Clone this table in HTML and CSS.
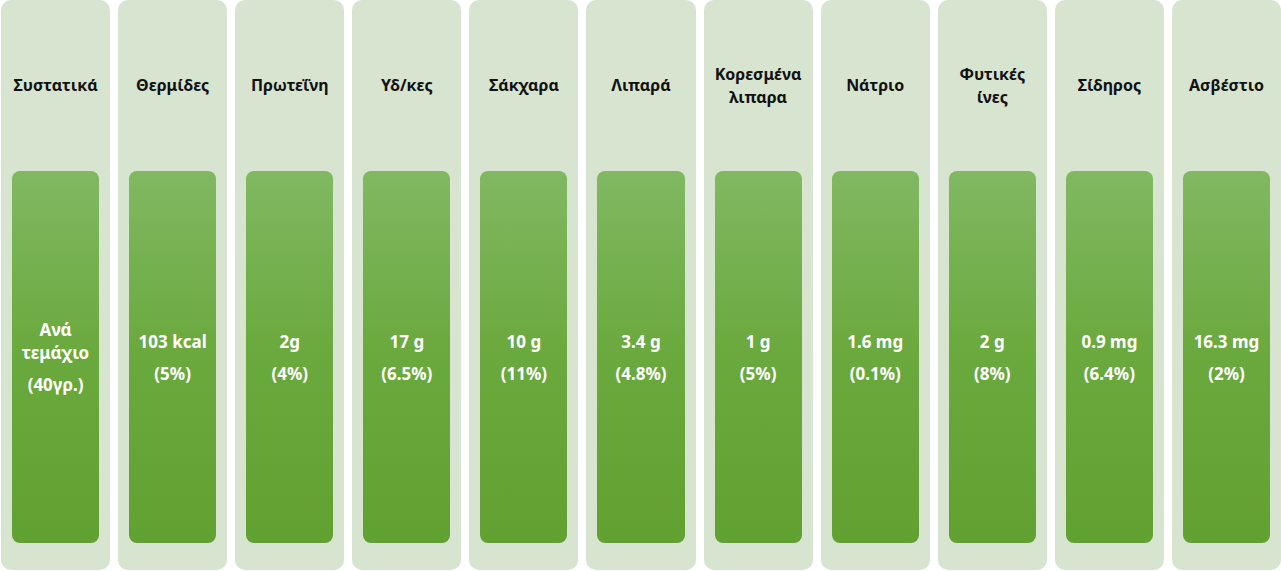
FILE: index.html
```html
<!DOCTYPE html>
<html lang="el">
<head>
<meta charset="utf-8">
<title>Διατροφικά στοιχεία</title>
<link rel="stylesheet" href="styles.css">
</head>
<body>
<div class="table">
  <div class="col"><div class="head">Συστατικά</div><div class="box"><div class="val"><div class="l1">Ανά τεμάχιο</div><div class="l2">(40γρ.)</div></div></div></div>
  <div class="col"><div class="head">Θερμίδες</div><div class="box"><div class="val"><div class="l1">103 kcal</div><div class="l2">(5%)</div></div></div></div>
  <div class="col"><div class="head">Πρωτεΐνη</div><div class="box"><div class="val"><div class="l1">2g</div><div class="l2">(4%)</div></div></div></div>
  <div class="col"><div class="head">Υδ/κες</div><div class="box"><div class="val"><div class="l1">17 g</div><div class="l2">(6.5%)</div></div></div></div>
  <div class="col"><div class="head">Σάκχαρα</div><div class="box"><div class="val"><div class="l1">10 g</div><div class="l2">(11%)</div></div></div></div>
  <div class="col"><div class="head">Λιπαρά</div><div class="box"><div class="val"><div class="l1">3.4 g</div><div class="l2">(4.8%)</div></div></div></div>
  <div class="col"><div class="head">Κορεσμένα λιπαρα</div><div class="box"><div class="val"><div class="l1">1 g</div><div class="l2">(5%)</div></div></div></div>
  <div class="col"><div class="head">Νάτριο</div><div class="box"><div class="val"><div class="l1">1.6 mg</div><div class="l2">(0.1%)</div></div></div></div>
  <div class="col"><div class="head">Φυτικές ίνες</div><div class="box"><div class="val"><div class="l1">2 g</div><div class="l2">(8%)</div></div></div></div>
  <div class="col"><div class="head">Σίδηρος</div><div class="box"><div class="val"><div class="l1">0.9 mg</div><div class="l2">(6.4%)</div></div></div></div>
  <div class="col"><div class="head">Ασβέστιο</div><div class="box"><div class="val"><div class="l1">16.3 mg</div><div class="l2">(2%)</div></div></div></div>
</div>
</body>
</html>
```
FILE: styles.css
```css
html, body {
  margin: 0;
  padding: 0;
  background: #ffffff;
}
body {
  font-family: "Noto Sans", "Open Sans", "DejaVu Sans", sans-serif;
}
.table {
  display: flex;
  gap: 8px;
  padding-left: 1px;
  height: 570px;
  width: 1281px;
  box-sizing: border-box;
}
.col {
  flex: 1 1 0;
  min-width: 0;
  background: #d7e4d0;
  border-radius: 10px;
  display: flex;
  flex-direction: column;
}
.head {
  height: 171px;
  display: flex;
  align-items: center;
  justify-content: center;
  text-align: center;
  font-weight: 700;
  font-size: 16px;
  line-height: 23px;
  color: #111111;
  padding: 0 8px;
}
.box {
  flex: 1 1 auto;
  margin: 0 11px 27px;
  border-radius: 8px;
  background: linear-gradient(to bottom, #81b862 0%, #6aa93d 50%, #61a131 100%);
  display: flex;
  align-items: center;
  justify-content: center;
  text-align: center;
  color: #ffffff;
  font-weight: 700;
  font-size: 17px;
  line-height: 23px;
}
.val {
  padding: 0 4px;
}
.l2 {
  margin-top: 9px;
}
```
